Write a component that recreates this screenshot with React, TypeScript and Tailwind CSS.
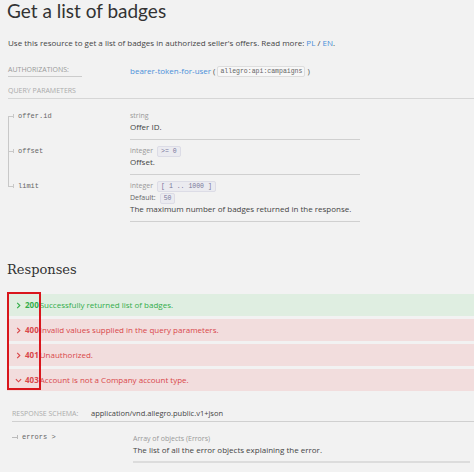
import React from "react";

const mono = "font-['Liberation_Mono',monospace]";

function Badge({ children }: { children: React.ReactNode }) {
  return (
    <span className={`${mono} inline-block text-[6.5px] leading-[9px] px-[3px] ml-[4px] bg-[#ebebf0] border border-[#dcdce6] rounded-[2px] text-[#777799]`}>
      {children}
    </span>
  );
}

function ParamRow({
  name,
  type,
  badge,
  def,
  desc,
  first,
  last,
  h,
}: {
  name: string;
  type: string;
  badge?: string;
  def?: string;
  desc: string;
  first?: boolean;
  last?: boolean;
  h: string;
}) {
  return (
    <div className={`flex ${h}`}>
      <div className="relative w-[122px] shrink-0">
        <div
          className={`absolute left-0 w-px bg-[#c8c8c8] ${first ? "top-[11px] bottom-0" : last ? "top-0 h-[12px]" : "top-0 bottom-0"}`}
        />
        <div className="absolute left-0 top-[11px] w-[5px] h-px bg-[#c8c8c8]" />
        <div className="absolute left-[5px] top-[9px] w-px h-[4px] bg-[#c8c8c8]" />
        <div className={`${mono} pl-[10px] pt-[6px] text-[7px] leading-[10px] text-[#666]`}>{name}</div>
      </div>
      <div className="w-[230px] border-b border-[#d0d0d0] pt-[6px]">
        <div className="flex items-center h-[10px] text-[7px] leading-[10px] text-[#999]">
          {type}
          {badge && <Badge>{badge}</Badge>}
        </div>
        {def && (
          <div className="flex items-center h-[10px] mt-[2px] text-[7px] leading-[10px] text-[#666]">
            Default:
            <Badge>{def}</Badge>
          </div>
        )}
        <div className="text-[8px] leading-[12px] text-[#444] whitespace-nowrap">{desc}</div>
      </div>
    </div>
  );
}

function Resp({ code, text, ok, open }: { code: string; text: string; ok?: boolean; open?: boolean }) {
  return (
    <div
      className={`flex items-center h-[22px] pl-[8px] text-[8px] ${ok ? "bg-[#dfeee1] text-[#33ad4a]" : "bg-[#f2dddd] text-[#d9474a]"}`}
    >
      <svg width="7" height="7" viewBox="0 0 8 8" className="mr-[3px]" fill="none" stroke="currentColor" strokeWidth="1.3">
        {open ? <path d="M1 2.5 L4 5.5 L7 2.5" /> : <path d="M2.5 1 L5.5 4 L2.5 7" />}
      </svg>
      <span className="font-bold mr-[1px]">{code}</span>
      <span>{text}</span>
    </div>
  );
}

export default function App() {
  return (
    <div className="w-[474px] h-[472px] overflow-hidden bg-[#f2f2f2] font-['Open_Sans',sans-serif] text-[#333]">
      <h1 className="pl-[7px] pt-[1px] text-[19px] leading-[20px] font-['Lato',sans-serif] text-[#333] font-normal">Get a list of badges</h1>
      <p className="pl-[8px] mt-[17px] text-[8px] leading-[10px] text-[#444]">
        Use this resource to get a list of badges in authorized seller's offers. Read more:{" "}
        <span className="text-[#4a90d9]">PL</span> / <span className="text-[#4a90d9]">EN</span>.
      </p>
      <div className="flex items-center mt-[17px] h-[12px]">
        <div className="w-[130px] shrink-0 pl-[8px]">
          <div className="text-[7px] leading-[10px] text-[#999] border-b border-[#ccc] pb-[1px] w-[74px]">AUTHORIZATIONS:</div>
        </div>
        <div className="flex items-center text-[8px] leading-[10px]">
          <span className="text-[#4a90d9]">bearer-token-for-user</span>
          <span className="ml-[2px] text-[#555]">(</span>
          <span className={`${mono} mx-[2px] text-[6.5px] leading-[9px] px-[2px] bg-[#f7f7f7] border border-[#ddd] rounded-[2px] text-[#666]`}>allegro:api:campaigns</span>
          <span className="text-[#555]">)</span>
        </div>
      </div>
      <div className="ml-[8px] mt-[9px] text-[7px] leading-[10px] text-[#aaa] border-b border-[#d6d6d6] pb-[2px]">QUERY PARAMETERS</div>
      <div className="pl-[8px] mt-[6px]">
        <ParamRow first name="offer.id" type="string" desc="Offer ID." h="h-[35px]" />
        <ParamRow name="offset" type="integer" badge=">= 0" desc="Offset." h="h-[35px]" />
        <ParamRow last name="limit" type="integer" badge="[ 1 .. 1000 ]" def="50" desc="The maximum number of badges returned in the response." h="h-[47px]" />
      </div>
      <h2 className="pl-[7px] mt-[40px] text-[13px] leading-[16px] font-['DejaVu_Serif',serif] text-[#333]">Responses</h2>
      <div className="relative ml-[7px] mt-[16px] flex flex-col gap-[3px]">
        <Resp ok code="200" text="Successfully returned list of badges." />
        <Resp code="400" text="Invalid values supplied in the query parameters." />
        <Resp code="401" text="Unauthorized." />
        <Resp open code="403" text="Account is not a Company account type." />
        <div className="absolute left-0 top-[-2px] w-[34px] h-[98px] border-2 border-[#d9161c]" />
      </div>
      <div className="ml-[12px] mt-[17px] flex items-baseline border-b border-[#d0d0d0] pb-[2px]">
        <span className="w-[79px] text-[7px] leading-[10px] text-[#aaa]">RESPONSE SCHEMA:</span>
        <span className="text-[7.5px] leading-[10px] text-[#444]">application/vnd.allegro.public.v1+json</span>
      </div>
      <div className="ml-[12px] mt-[9px] flex">
        <div className={`w-[121px] shrink-0 flex items-start pt-[1px] ${mono} text-[7px] leading-[10px] text-[#666]`}>
          <span className="inline-block w-[5px] h-px bg-[#bbb] mt-[5px]" />
          <span className="inline-block w-px h-[4px] bg-[#bbb] mr-[4px] mt-[3px]" />
          errors &gt;
        </div>
        <div className="flex-1 mr-[4px] border-b-2 border-[#dcdcdc] pt-[3px] pb-[5px]">
          <div className="text-[7px] leading-[10px] text-[#999]">Array of objects (Errors)</div>
          <div className="text-[8px] leading-[12px] text-[#444]">The list of all the error objects explaining the error.</div>
        </div>
      </div>
    </div>
  );
}
